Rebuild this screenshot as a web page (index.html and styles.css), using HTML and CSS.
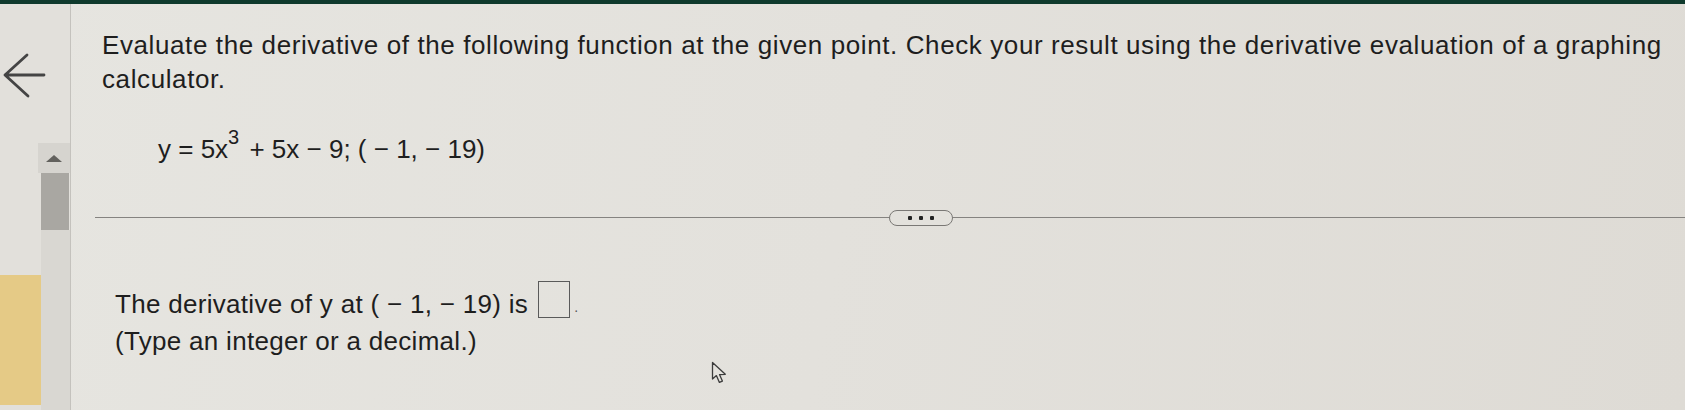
FILE: index.html
```html
<!DOCTYPE html>
<html lang="en">
<head>
<meta charset="utf-8">
<title>Derivative question</title>
<link rel="stylesheet" href="styles.css">
</head>
<body>
<div class="topbar"></div>
<div class="page">
  <aside class="rail">
    <div class="rail-left">
      <svg class="back" width="44" height="46" viewBox="0 0 44 46" aria-label="Back">
        <path d="M42 22 H3 M25 2 L3 22 L26 43" fill="none" stroke="#444" stroke-width="2.8" stroke-linecap="round" stroke-linejoin="round"/>
      </svg>
      <div class="yellow"></div>
    </div>
    <div class="scroll">
      <div class="scroll-up"><span class="tri"></span></div>
      <div class="scroll-thumb"></div>
      <div class="scroll-track"></div>
    </div>
  </aside>
  <main class="content">
    <p class="question">Evaluate the derivative of the following function at the given point. Check your result using the derivative evaluation of a graphing calculator.</p>
    <p class="equation">y = 5x<sup>3</sup> + 5x − 9; ( − 1, − 19)</p>
    <div class="divider">
      <span class="pill"><i></i><i></i><i></i></span>
    </div>
    <div class="answer"><span class="answer-text">The derivative of y at ( − 1, − 19) is</span><span class="box"></span><span class="dot">.</span></div>
    <p class="hint">(Type an integer or a decimal.)</p>
  </main>
</div>
<svg class="cursor" width="17" height="23" viewBox="0 0 17 23">
  <path d="M1.5 1.5 L1.5 18 L5.4 14.6 L8.4 21.4 L11.4 20.1 L8.5 13.6 L14.3 13.3 Z" fill="#e4e2dd" stroke="#3c3c3c" stroke-width="1.3" stroke-linejoin="round"/>
</svg>
</body>
</html>
```
FILE: styles.css
```css
html, body {
  margin: 0;
  padding: 0;
}
body {
  width: 1685px;
  height: 410px;
  overflow: hidden;
  background: linear-gradient(100deg, #e6e5e0 0%, #e3e1dc 50%, #dedbd5 100%);
  font-family: "Liberation Sans", Arial, sans-serif;
  color: #1e1e1e;
  position: relative;
}
.topbar {
  height: 4px;
  background: #0f3a2d;
}
.page {
  display: flex;
  height: 406px;
}
.rail {
  width: 70px;
  flex: none;
  display: flex;
  border-right: 1px solid #c4c2bd;
  background: #e2e0db;
}
.rail-left {
  width: 38px;
  flex: none;
  display: flex;
  flex-direction: column;
}
.back {
  display: block;
  margin: 49px 0 0 2px;
}
.yellow {
  margin-top: 176px;
  width: 42px;
  height: 130px;
  background: #e5ca86;
}
.scroll {
  width: 32px;
  flex: none;
  display: flex;
  flex-direction: column;
  margin-top: 139px;
}
.scroll-up {
  height: 30px;
  background: #d6d4cf;
  display: flex;
  justify-content: center;
  align-items: center;
}
.tri {
  width: 0;
  height: 0;
  border-left: 8px solid transparent;
  border-right: 8px solid transparent;
  border-bottom: 7px solid #62615d;
}
.scroll-thumb {
  height: 57px;
  margin: 0 1px 0 3px;
  background: #a9a7a2;
}
.scroll-track {
  flex: 1;
  margin-left: 3px;
  background: #d9d7d2;
}
.content {
  flex: 1;
  padding-left: 31px;
  padding-top: 24px;
}
.question {
  margin: 0;
  font-size: 26px;
  line-height: 34px;
  letter-spacing: 0.6px;
}
.equation {
  margin: 36px 0 0 56px;
  font-size: 26px;
  line-height: 34px;
}
.equation sup {
  font-size: 20px;
  line-height: 0;
  vertical-align: 14px;
  margin-right: 3px;
}
.divider {
  margin: 43px 0 0 -7px;
  height: 17px;
  display: flex;
  align-items: center;
  justify-content: center;
  position: relative;
}
.divider::before {
  content: "";
  position: absolute;
  left: 0;
  right: 0;
  top: 8px;
  border-top: 1.5px solid #858380;
}
.pill {
  position: relative;
  width: 62px;
  height: 14px;
  border: 1.5px solid #7a7875;
  border-radius: 9px;
  background: #e3e1dc;
  display: flex;
  justify-content: center;
  align-items: center;
  gap: 7px;
  margin-left: 62px;
}
.pill i {
  width: 4px;
  height: 4px;
  background: #222;
  border-radius: 1px;
}
.answer {
  margin: 59px 0 0 13px;
  font-size: 26px;
  line-height: 38px;
  letter-spacing: 0.3px;
  display: flex;
  align-items: flex-start;
  height: 38px;
}
.answer-text {
  white-space: pre;
}
.box {
  display: block;
  width: 30px;
  height: 35px;
  border: 1.5px solid #5a5a5a;
  margin: -4px 0 0 10px;
}
.dot {
  font-size: 14px;
  margin: 12px 0 0 4px;
  color: #555;
  line-height: 20px;
}
.hint {
  margin: 0 0 0 13px;
  font-size: 26px;
  line-height: 36px;
  letter-spacing: 0.3px;
}
.cursor {
  position: absolute;
  left: 711px;
  top: 361px;
}
```
